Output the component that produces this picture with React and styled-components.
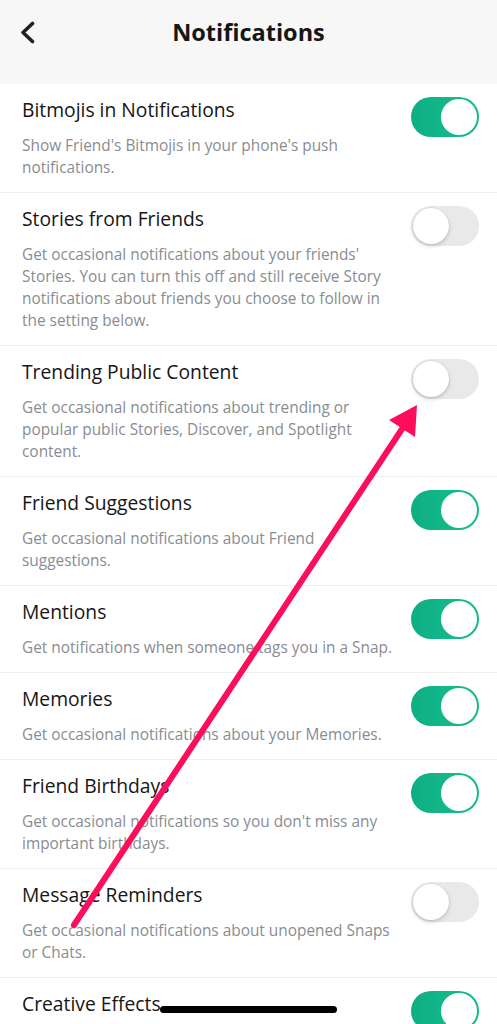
import React from "react";
import styled, { createGlobalStyle } from "styled-components";

const GlobalStyle = createGlobalStyle`
  html, body {
    margin: 0;
    padding: 0;
    background: #ffffff;
  }
  body {
    font-family: "Open Sans", "Noto Sans", sans-serif;
    -webkit-font-smoothing: antialiased;
  }
`;

const Screen = styled.div`
  position: relative;
  width: 100%;
  height: 100vh;
  overflow: hidden;
  background: #ffffff;
`;

const Header = styled.header`
  height: 84px;
  background: #f7f7f7;
  display: grid;
  grid-template-columns: 60px 1fr 60px;
  align-items: start;
`;

const BackButton = styled.button`
  border: 0;
  background: none;
  padding: 0;
  margin: 20px 0 0 16px;
  width: 24px;
  height: 26px;
  display: flex;
  align-items: center;
  justify-content: center;
  color: #222;
`;

const Title = styled.h1`
  margin: 14px 0 0;
  text-align: center;
  font-family: "Open Sans", sans-serif;
  font-weight: 700;
  font-size: 23.5px;
  line-height: 36px;
  color: #161616;
`;

const List = styled.div`
  display: flex;
  flex-direction: column;
`;

const Row = styled.div`
  display: flex;
  align-items: flex-start;
  justify-content: space-between;
  padding: 13px 18px 13px 22px;
  border-bottom: 1px solid #efefef;
`;

const TextCol = styled.div`
  width: 374px;
`;

const RowTitle = styled.div`
  font-size: 19.3px;
  line-height: 26px;
  color: #161616;
  font-weight: 500;
`;

const RowDesc = styled.div`
  margin-top: 12px;
  font-size: 15.4px;
  line-height: 22px;
  color: #898c92;
`;

const Track = styled.div`
  flex: none;
  width: 68px;
  height: 40px;
  border-radius: 20px;
  box-sizing: border-box;
  padding: 2px;
  display: flex;
  justify-content: ${(p) => (p.$on ? "flex-end" : "flex-start")};
  background: ${(p) =>
    p.$on ? "linear-gradient(90deg, #0fae84 0%, #12b98b 60%)" : "#e9e9ea"};
`;

const Thumb = styled.div`
  width: 36px;
  height: 36px;
  border-radius: 50%;
  background: #ffffff;
  box-shadow: ${(p) =>
    p.$on
      ? "none"
      : "0 2px 4px rgba(0,0,0,0.18), 0 0 0 0.5px rgba(0,0,0,0.08)"};
`;

const Toggle = ({ on }) => (
  <Track $on={on}>
    <Thumb $on={on} />
  </Track>
);

const Annotation = styled.svg`
  position: absolute;
  left: 0;
  top: 0;
  width: 497px;
  height: 1024px;
  pointer-events: none;
`;

const HomeIndicator = styled.div`
  position: absolute;
  left: 160px;
  width: 177px;
  bottom: 11px;
  height: 7px;
  border-radius: 4px;
  background: #000;
`;

const settings = [
  {
    title: "Bitmojis in Notifications",
    desc: "Show Friend's Bitmojis in your phone's push notifications.",
    on: true,
  },
  {
    title: "Stories from Friends",
    desc:
      "Get occasional notifications about your friends' Stories. You can turn this off and still receive Story notifications about friends you choose to follow in the setting below.",
    on: false,
  },
  {
    title: "Trending Public Content",
    desc:
      "Get occasional notifications about trending or popular public Stories, Discover, and Spotlight content.",
    on: false,
  },
  {
    title: "Friend Suggestions",
    desc: "Get occasional notifications about Friend suggestions.",
    on: true,
  },
  {
    title: "Mentions",
    desc: "Get notifications when someone tags you in a Snap.",
    on: true,
  },
  {
    title: "Memories",
    desc: "Get occasional notifications about your Memories.",
    on: true,
  },
  {
    title: "Friend Birthdays",
    desc:
      "Get occasional notifications so you don't miss any important birthdays.",
    on: true,
  },
  {
    title: "Message Reminders",
    desc:
      "Get occasional notifications about unopened Snaps or Chats.",
    on: false,
  },
  {
    title: "Creative Effects",
    desc: "",
    on: true,
  },
];

export default function App() {
  return (
    <Screen>
      <GlobalStyle />
      <Header>
        <BackButton aria-label="Back">
          <svg width="16" height="24" viewBox="0 0 16 24">
            <path
              d="M12.5 2.5 L3 11.5 L12.5 20.5"
              fill="none"
              stroke="#222"
              strokeWidth="3.6"
              strokeLinecap="round"
              strokeLinejoin="round"
            />
          </svg>
        </BackButton>
        <Title>Notifications</Title>
        <div />
      </Header>
      <List>
        {settings.map((s) => (
          <Row key={s.title}>
            <TextCol>
              <RowTitle>{s.title}</RowTitle>
              {s.desc && <RowDesc>{s.desc}</RowDesc>}
            </TextCol>
            <Toggle on={s.on} />
          </Row>
        ))}
      </List>
      <Annotation viewBox="0 0 497 1024">
        <line
          x1="74"
          y1="925"
          x2="404"
          y2="426"
          stroke="#fe0d5b"
          strokeWidth="6"
          strokeLinecap="round"
        />
        <polygon points="417,405 415,437 389,420" fill="#fe0d5b" />
      </Annotation>
      <HomeIndicator />
    </Screen>
  );
}
